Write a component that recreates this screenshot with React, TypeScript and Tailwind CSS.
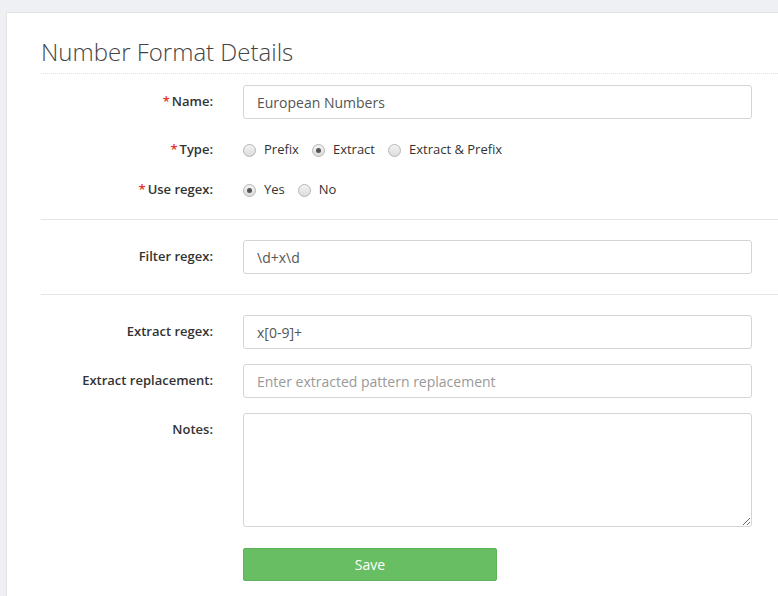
export default function App() {
  const label = "w-[172px] shrink-0 text-right text-[13px] font-semibold text-[#333]";
  const input = "w-[509px] h-[34px] border border-[#d5d5d5] rounded-[3px] px-[13px] text-[14px] text-[#555] outline-none placeholder:text-[#999] bg-white";
  const Star = () => <span className="text-[#e4322b] mr-[2px]">*</span>;
  const Radio = ({ on, text }: { on?: boolean; text: string }) => (
    <span className="flex items-center mr-[13px]">
      <span className="w-[13px] h-[13px] rounded-full border border-[#b5b5b5] bg-gradient-to-b from-[#f3f3f3] to-[#dcdcdc] flex items-center justify-center mr-[8px]">
        {on && <span className="w-[5px] h-[5px] rounded-full bg-[#555]" />}
      </span>
      <span className="text-[13px] text-[#333]">{text}</span>
    </span>
  );
  return (
    <div className="w-[778px] h-[596px] bg-[#eff0f4] pt-[12px] pl-[6px] overflow-hidden" style={{ fontFamily: '"Open Sans", sans-serif' }}>
      <div className="bg-white h-full border-l border-t border-[#e3e3e3] pl-[34px]">
        <h1 className="text-[24px] font-light text-[#444] pt-[23px] leading-[32px] pb-[5px]">Number Format Details</h1>
        <div className="border-t border-dotted border-[#e2e2e2]" />
        <div className="flex items-center h-[34px] mt-[11px]">
          <div className={label}><Star />Name:</div>
          <input className={`${input} ml-[30px]`} defaultValue="European Numbers" />
        </div>
        <div className="flex items-center h-[20px] mt-[21px]">
          <div className={label}><Star />Type:</div>
          <div className="flex ml-[30px]">
            <Radio text="Prefix" /><Radio on text="Extract" /><Radio text="Extract & Prefix" />
          </div>
        </div>
        <div className="flex items-center h-[20px] mt-[20px]">
          <div className={label}><Star />Use regex:</div>
          <div className="flex ml-[30px]">
            <Radio on text="Yes" /><Radio text="No" />
          </div>
        </div>
        <div className="border-t border-[#e5e5e5] mt-[19px]" />
        <div className="flex items-center h-[34px] mt-[20px]">
          <div className={label}>Filter regex:</div>
          <input className={`${input} ml-[30px]`} defaultValue="\d+x\d" />
        </div>
        <div className="border-t border-[#e5e5e5] mt-[20px]" />
        <div className="flex items-center h-[34px] mt-[20px]">
          <div className={label}>Extract regex:</div>
          <input className={`${input} ml-[30px]`} defaultValue="x[0-9]+" />
        </div>
        <div className="flex items-center h-[34px] mt-[15px]">
          <div className={label}>Extract replacement:</div>
          <input className={`${input} ml-[30px]`} placeholder="Enter extracted pattern replacement" />
        </div>
        <div className="flex items-start mt-[15px]">
          <div className={`${label} pt-[7px]`}>Notes:</div>
          <textarea className="w-[509px] h-[114px] border border-[#d5d5d5] rounded-[3px] ml-[30px] outline-none" />
        </div>
        <div className="flex mt-[21px]">
          <div className="w-[172px] shrink-0" />
          <button className="ml-[30px] w-[254px] h-[33px] bg-[#68be63] border border-[#5eb359] rounded-[2px] text-white text-[14px]">Save</button>
        </div>
      </div>
    </div>
  );
}
